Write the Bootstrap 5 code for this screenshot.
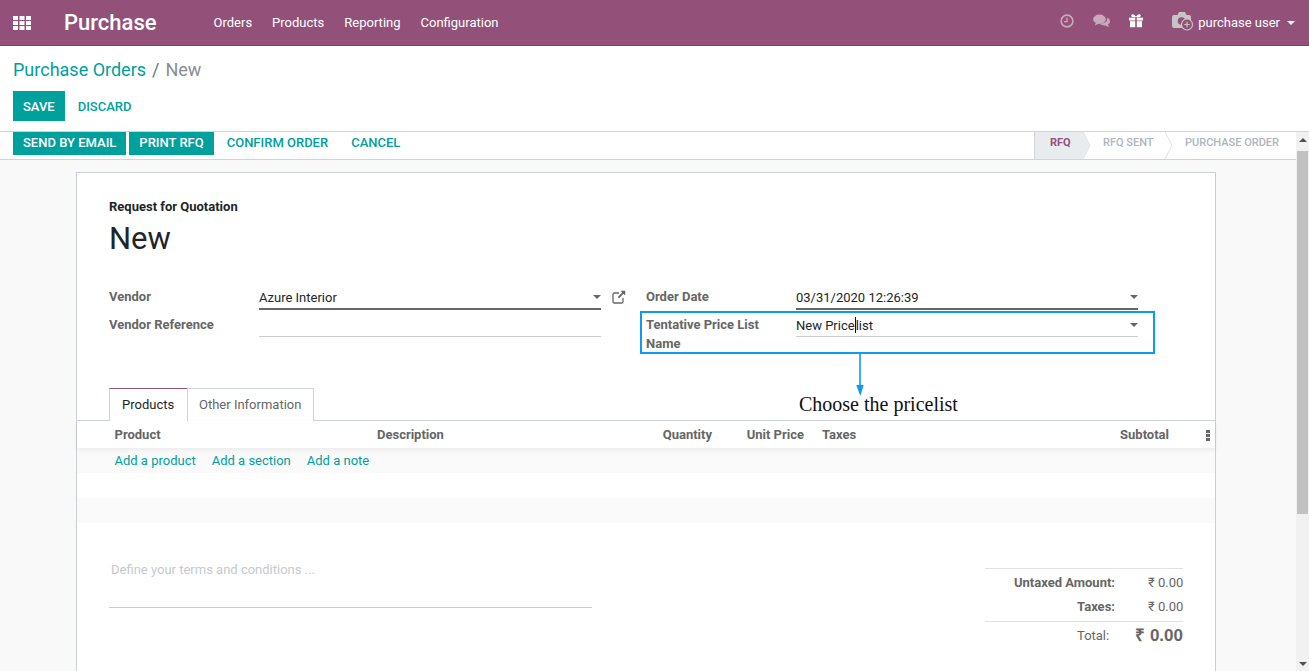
<!DOCTYPE html>
<html lang="en">
<head>
<meta charset="utf-8">
<title>Purchase</title>
<link rel="stylesheet" href="https://cdn.jsdelivr.net/npm/bootstrap@5.3.0/dist/css/bootstrap.min.css">
<style>
html,body{height:671px;overflow:hidden}
body{font-family:Roboto,"Liberation Sans",sans-serif;font-size:13px;line-height:1.5;color:#212529;background:#fff}
a{text-decoration:none}
.o-top{height:46px;background:#93517a;border-bottom:1px solid #7c4165;color:#fff;padding:0}
.o-apps{margin-left:13px;width:18px;height:14px;display:block}
.o-brand{font-size:22px;font-weight:500;color:#fff;margin-left:33px;margin-right:47px;line-height:30px}
.o-menu a{color:#fff;padding:0 10px;font-size:13px;line-height:19px}
.o-sys{margin-right:14px}
.o-sys svg{margin-bottom:3px}
.o-user{color:#fff;font-size:13px}
.o-drop{width:0;height:0;border-left:4px solid transparent;border-right:4px solid transparent;border-top:4.5px solid #fff;margin-left:7px}
.o-panel{height:85px;padding:12px 13px 0}
.o-crumb{font-size:18px;line-height:24px;color:#00a09d}
.o-crumb-link{color:inherit}
.o-crumb .o-sep{color:#6c757d;padding:0 6px}
.o-crumb .o-now{color:#868e96}
.o-actions{margin-top:9px}
.o-btn{border-radius:0;border:0;font-size:13px;font-weight:500;padding:0 10px;line-height:31px;height:30px}
.o-btn-fill{background:#00a09d;color:#fff}
.o-btn-fill:hover{background:#00a09d;color:#fff}
.o-btn-link{background:transparent;color:#00a09d;padding:0 13px}
.o-main{height:540px}
.o-left{flex:1 1 auto;min-width:0;display:flex;flex-direction:column;width:1296px}
.o-status-bar{height:28px;margin-top:1px;border-bottom:1px solid #ced4da;padding-left:13px;flex:none}
.o-rule{height:1px;background:#ced4da;position:absolute;left:0;right:0;top:131px}
.o-status-bar .o-btn{line-height:21px;height:23px;padding:0 10px 2px;margin-right:3px}
.o-steps{height:27px;color:#adb5bd;font-size:11px;font-weight:500}
.o-step{display:flex;align-items:center;height:27px;padding-bottom:4px}
.o-step-on{background:#e9ecef;color:#93517a;padding-left:15px;width:49px;font-weight:700;border-left:1px solid #ced4da}
.o-step-txt{padding-left:12px}
.o-step-a{width:74px}
.o-step-b{width:123px}
.o-area{flex:1 1 auto;background:#f9f9f9;padding:12px 80px 0 76px;overflow:hidden}
.o-sheet{background:#fff;border:1px solid #c9ced8;height:520px;width:1140px;padding-top:25px}
.o-inner{padding:0 32px}
.o-subtitle{font-weight:700;font-size:13px;line-height:18px;color:#212529}
.o-title{font-size:31px;font-weight:400;line-height:41px;margin:2px 0 28px}
.o-label{width:150px;flex:none;font-weight:700;color:#666;line-height:19px;font-size:13px;padding-right:16px}
.o-field{width:342px;height:22px;flex:none;border-bottom:1px solid #ccc;line-height:19px;display:flex;justify-content:space-between;padding-top:1px;color:#212529}
.o-field.o-active{height:23px;border-bottom:2px solid #666}
.o-arrow{width:0;height:0;border-left:4.5px solid transparent;border-right:4.5px solid transparent;border-top:4.5px solid #666;margin-top:7px}
.o-col{width:537px;flex:none}
.o-line{height:28px}
.o-line-tall{height:46px}
.o-ext{margin-left:11px;margin-top:3px}
.o-cursor{display:inline-block;width:0;height:16px;border-left:1px solid #111;vertical-align:-3px}
.o-tabs{margin-top:27px;padding-left:32px;border-bottom:1px solid #ced4da;height:33px;display:flex}
.o-tab{height:33px;border:1px solid #ced4da;border-bottom:0;padding:0 11px;line-height:32px;color:#666;background:#fff;white-space:nowrap}
.o-tab-on{border-top:1px solid #93517a;color:#212529;border-right:0;width:78px;padding:0 12px;position:relative;z-index:1}
.o-tab-other{width:127px}
.o-thead{height:27px;padding-top:1px;display:flex;align-items:center;font-weight:700;color:#666;box-shadow:0 2px 5px rgba(0,0,0,.07);position:relative;font-size:13px}
.o-th{flex:none}
.o-w1{margin-left:37.5px;width:262.5px}
.o-w2{width:260px}
.o-w3{width:75px}
.o-w4{width:92px}
.o-w5{margin-left:18px;width:200px}
.o-w6{width:147px}
.o-w7{margin-left:37px}
.o-row{height:25px;padding-left:37.5px;line-height:25px}
.o-row a{color:#00a09d;margin-right:16px}
.o-row-alt{background:#fafafa}
.o-foot{padding:36px 32px 0 32px;display:flex;justify-content:space-between}
.o-terms{width:483px;height:49px;border-bottom:1px solid #ccc;color:#c5c9ce;padding:1px 2px 0;flex:none}
.o-totals{width:198px;border-top:1px solid #dee2e6;margin-top:9px;padding-top:2px;flex:none;color:#666}
.o-tot{display:flex;justify-content:flex-end;line-height:24px;height:24px}
.o-tot b{font-weight:700;margin-right:33px}
.o-tot span{width:35px;text-align:right;white-space:nowrap}
.o-tot-big{border-top:1px solid #dee2e6;height:28px;line-height:27px;margin-top:2px}
.o-tot-big em{font-style:normal;margin-right:26px}
.o-tot-big strong{font-size:17px;font-weight:700;font-family:"Liberation Sans",sans-serif}
.o-bar{width:13px;flex:none;background:#f1f1f1;display:flex;flex-direction:column;align-items:center;height:540px}
.o-bar-up{width:0;height:0;border-left:4px solid transparent;border-right:4px solid transparent;border-bottom:4px solid #505050;margin-top:7px}
.o-bar-thumb{width:11px;height:363px;background:#c1c1c1;margin-top:9px}
.o-bar-down{width:0;height:0;border-left:4px solid transparent;border-right:4px solid transparent;border-top:4px solid #505050;margin-top:148px}
.o-hl{position:absolute;left:640px;top:311px;width:515px;height:43px;border:2px solid #0d9bf2;pointer-events:none}
.o-pointer{position:absolute;left:852px;top:353px;display:block}
.o-note{position:absolute;left:799px;top:391px;font-family:"Liberation Serif",serif;font-size:20px;line-height:26px;color:#111}
.o-gap-a{margin-right:19px}
.o-gap-b{margin-right:29px}
.o-gap-c{margin-right:4px}
</style>
</head>
<body>
<nav class="navbar o-top d-flex flex-nowrap justify-content-start align-items-center">
  <svg class="o-apps" viewBox="0 0 18 14" aria-hidden="true"><g fill="#fff"><rect x="0" y="0" width="5" height="4"/><rect x="6.5" y="0" width="5" height="4"/><rect x="13" y="0" width="5" height="4"/><rect x="0" y="5" width="5" height="4"/><rect x="6.5" y="5" width="5" height="4"/><rect x="13" y="5" width="5" height="4"/><rect x="0" y="10" width="5" height="4"/><rect x="6.5" y="10" width="5" height="4"/><rect x="13" y="10" width="5" height="4"/></g></svg>
  <a class="o-brand" href="#">Purchase</a>
  <div class="nav o-menu">
    <a class="nav-link" href="#">Orders</a>
    <a class="nav-link" href="#">Products</a>
    <a class="nav-link" href="#">Reporting</a>
    <a class="nav-link" href="#">Configuration</a>
  </div>
  <div class="d-flex align-items-center ms-auto o-sys">
    <svg class="o-gap-a" width="14" height="14" viewBox="0 0 14 14" aria-hidden="true"><circle cx="7" cy="7" r="5.9" fill="none" stroke="#c9a8bd" stroke-width="1.6"/><path d="M7 3.5V7.6H3.9" fill="none" stroke="#c9a8bd" stroke-width="1.3"/></svg>
    <svg class="o-gap-a" width="17" height="14" viewBox="0 0 17 14" aria-hidden="true"><ellipse cx="6.5" cy="5.2" rx="6.3" ry="4.7" fill="#c9a8bd"/><path d="M3 8.5L1.8 11.4 6 9.6z" fill="#c9a8bd"/><path d="M14 3.6c1.8.8 3 2.2 3 3.8 0 1.3-.8 2.4-2 3.2l1 2.6-3.6-1.8c-2 .3-4.2-.3-5.4-1.6 3.800 0 8.200-2 7-6.200z" fill="#c9a8bd"/></svg>
    <svg class="o-gap-b" width="14" height="14" viewBox="0 0 14 14" aria-hidden="true"><g fill="#fff"><path d="M3.300.3c1.500-.5 3 1 3.700 2.500C7.700 1.300 9.200-.2 10.700.3c1.500.5 1.300 2.400-.2 2.900H3.500C2 2.700 1.800.8 3.300.300z"/><rect x="0" y="3.700" width="6.200" height="2.800"/><rect x="7.800" y="3.700" width="6.200" height="2.800"/><rect x="1" y="7.200" width="5.200" height="6"/><rect x="7.800" y="7.200" width="5.200" height="6"/></g></svg>
    <svg class="o-gap-c" width="22" height="20" viewBox="0 0 22 20" aria-hidden="true"><path d="M2 4h3.500L7 1h6l1.500 3H17a2 2 0 0 1 2 2v9a2 2 0 0 1-2 2H2a2 2 0 0 1-2-2V6a2 2 0 0 1 2-2z" fill="#c8c3c7"/><circle cx="9.500" cy="10" r="3.800" fill="#93517a"/><circle cx="15" cy="13.500" r="5.500" fill="#93517a" stroke="#c8c3c7" stroke-width="1.200"/><path d="M15 10.800v5.400M12.300 13.500h5.400" stroke="#c8c3c7" stroke-width="1.200"/></svg>
    <span class="o-user">purchase user</span><span class="o-drop"></span>
  </div>
</nav>

<div class="o-panel">
  <div class="o-crumb"><a href="#" class="o-crumb-link">Purchase Orders</a><span class="o-sep">/</span><span class="o-now">New</span></div>
  <div class="d-flex o-actions">
    <button type="button" class="btn o-btn o-btn-fill">SAVE</button>
    <button type="button" class="btn o-btn o-btn-link">DISCARD</button>
  </div>
</div>
<div class="o-rule"></div>

<div class="d-flex o-main">
  <div class="o-left">
    <div class="d-flex align-items-start justify-content-between o-status-bar">
      <div class="d-flex">
        <button type="button" class="btn o-btn o-btn-fill">SEND BY EMAIL</button>
        <button type="button" class="btn o-btn o-btn-fill">PRINT RFQ</button>
        <button type="button" class="btn o-btn o-btn-link">CONFIRM ORDER</button>
        <button type="button" class="btn o-btn o-btn-link">CANCEL</button>
      </div>
      <div class="d-flex o-steps">
        <div class="o-step o-step-on">RFQ</div>
        <svg width="8" height="27" viewBox="0 0 8 27" class="d-block" aria-hidden="true"><path d="M0 0L7 13.500 0 27z" fill="#e9ecef"/><path d="M0 0L7 13.500 0 27" fill="none" stroke="#dfe3e8"/></svg>
        <div class="o-step o-step-txt o-step-a">RFQ SENT</div>
        <svg width="8" height="27" viewBox="0 0 8 27" class="d-block" aria-hidden="true"><path d="M0 0L7 13.500 0 27" fill="none" stroke="#dee2e6"/></svg>
        <div class="o-step o-step-txt o-step-b">PURCHASE ORDER</div>
      </div>
    </div>
    <div class="o-area">
      <div class="o-sheet">
        <div class="o-inner">
          <div class="o-subtitle">Request for Quotation</div>
          <h1 class="o-title">New</h1>
          <div class="d-flex">
            <div class="o-col">
              <div class="d-flex o-line">
                <div class="o-label">Vendor</div>
                <div class="o-field o-active"><span>Azure Interior</span><span class="o-arrow"></span></div>
                <svg class="o-ext" width="14" height="14" viewBox="0 0 14 14" aria-hidden="true"><path d="M7 3H2.300A1.300 1.300 0 0 0 1 4.300v7.400A1.300 1.300 0 0 0 2.300 13h7.400a1.300 1.300 0 0 0 1.300-1.300V8" fill="none" stroke="#666" stroke-width="1.300"/><path d="M8.500.800H13.200V5.500L11.500 3.800 7 8.300 5.700 7 10.200 2.500z" fill="#666"/></svg>
              </div>
              <div class="d-flex o-line">
                <div class="o-label">Vendor Reference</div>
                <div class="o-field"></div>
              </div>
            </div>
            <div>
              <div class="d-flex o-line">
                <div class="o-label">Order Date</div>
                <div class="o-field o-active"><span>03/31/2020 12:26:39</span><span class="o-arrow"></span></div>
              </div>
              <div class="d-flex o-line-tall">
                <div class="o-label">Tentative Price List Name</div>
                <div class="o-field"><span>New Price<span class="o-cursor"></span>list</span><span class="o-arrow"></span></div>
              </div>
            </div>
          </div>
        </div>
        <div class="o-tabs">
          <div class="o-tab o-tab-on">Products</div>
          <div class="o-tab o-tab-other">Other Information</div>
        </div>
        <div class="o-thead">
          <div class="o-th o-w1">Product</div>
          <div class="o-th o-w2">Description</div>
          <div class="o-th o-w3 text-end">Quantity</div>
          <div class="o-th o-w4 text-end">Unit Price</div>
          <div class="o-th o-w5">Taxes</div>
          <div class="o-th o-w6 text-end">Subtotal</div>
          <svg class="o-th o-w7" width="4" height="11" viewBox="0 0 4 11" aria-hidden="true"><g fill="#666"><rect x="0" width="4" height="3"/><rect x="0" y="4" width="4" height="3"/><rect x="0" y="8" width="4" height="3"/></g></svg>
        </div>
        <div class="o-row o-row-alt"><a href="#">Add a product</a><a href="#">Add a section</a><a href="#">Add a note</a></div>
        <div class="o-row"></div>
        <div class="o-row o-row-alt"></div>
        <div class="o-foot">
          <div class="o-terms">Define your terms and conditions ...</div>
          <div class="o-totals">
            <div class="o-tot"><b>Untaxed Amount:</b><span>₹ 0.00</span></div>
            <div class="o-tot"><b>Taxes:</b><span>₹ 0.00</span></div>
            <div class="o-tot o-tot-big"><em>Total:</em><strong>₹ 0.00</strong></div>
          </div>
        </div>
      </div>
    </div>
  </div>
  <div class="o-bar"><span class="o-bar-up"></span><span class="o-bar-thumb"></span><span class="o-bar-down"></span></div>
</div>

<div class="o-hl"></div>
<svg class="o-pointer" width="16" height="44" viewBox="0 0 16 44" aria-hidden="true"><path d="M8 1V34" stroke="#0d9bf2" stroke-width="1.600"/><path d="M4.300 32H11.700L8.300 43z" fill="#0d9bf2"/></svg>
<div class="o-note">Choose the pricelist</div>
<script src="https://cdn.jsdelivr.net/npm/bootstrap@5.3.0/dist/js/bootstrap.bundle.min.js"></script>
</body>
</html>
